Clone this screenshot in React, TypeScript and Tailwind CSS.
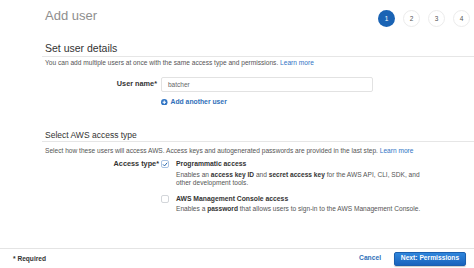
import React from 'react';

const steps = [1, 2, 3, 4];

function Checkbox({ checked }: { checked?: boolean }) {
  return (
    <div
      className={
        checked
          ? 'w-[8px] h-[8px] border border-[#a9c3e3] rounded-[2px] bg-white flex items-center justify-center shrink-0'
          : 'w-[8px] h-[8px] border border-[#d3d6da] rounded-[2px] bg-white flex items-center justify-center shrink-0'
      }
    >
      {checked && (
        <svg viewBox="0 0 10 10" className="w-[7px] h-[7px]">
          <path d="M2 5.2 L4.2 7.4 L8.2 2.6" fill="none" stroke="#1f5fa8" strokeWidth="1.6" strokeLinecap="round" strokeLinejoin="round" />
        </svg>
      )}
    </div>
  );
}

export default function App() {
  return (
    <div className="w-[474px] h-[268px] bg-white flex flex-col overflow-hidden font-['Liberation_Sans',Arial,sans-serif] text-[#444]">
      {/* header */}
      <div className="flex justify-between h-[38px]">
        <h1 className="text-[13px] leading-[15px] pt-[8px] pl-[45px] text-[#8e8e8e]">Add user</h1>
        <div className="flex gap-[8px] pt-[10px] pr-[4px]">
          {steps.map((s) =>
            s === 1 ? (
              <div key={s} className="w-[17px] h-[17px] rounded-full bg-[#1a63b4] text-white text-[6.5px] flex items-center justify-center">
                {s}
              </div>
            ) : (
              <div key={s} className="w-[17px] h-[17px] rounded-full bg-white border border-[#ececec] text-[#555] text-[6.5px] flex items-center justify-center">
                {s}
              </div>
            )
          )}
        </div>
      </div>

      {/* set user details */}
      <div className="ml-[42px] mt-[4px] pl-[3px] pb-[2px] border-b border-[#e6e6e6]">
        <h2 className="text-[10.5px] leading-[12px] text-[#333]">Set user details</h2>
      </div>
      <p className="pl-[45px] mt-[2px] text-[6.6px] leading-[8px] text-[#555]">
        You can add multiple users at once with the same access type and permissions.{' '}
        <span className="text-[#2f74c4]">Learn more</span>
      </p>

      <div className="flex items-center mt-[10px]">
        <label className="w-[157px] text-right text-[7.3px] font-bold text-[#333]">User name*</label>
        <div className="ml-[4px] w-[212px] h-[15px] border border-[#e2e2e2] rounded-[2px] flex items-center pl-[6px] text-[6.5px] text-[#666]">
          batcher
        </div>
      </div>
      <div className="flex items-center mt-[6px] pl-[161px] h-[8px]">
        <svg viewBox="0 0 10 10" className="w-[6.5px] h-[6.5px]">
          <circle cx="5" cy="5" r="5" fill="#2f74c4" />
          <path d="M5 2.4 V7.6 M2.4 5 H7.6" stroke="white" strokeWidth="1.6" />
        </svg>
        <span className="ml-[3px] text-[6.8px] font-bold text-[#2f6fb9]">Add another user</span>
      </div>

      {/* access type */}
      <div className="ml-[42px] mt-[24px] pl-[3px] pb-[1px] border-b border-[#e6e6e6]">
        <h2 className="text-[8.5px] leading-[10px] text-[#333]">Select AWS access type</h2>
      </div>
      <p className="pl-[45px] mt-[5px] text-[6.6px] leading-[8px] text-[#555]">
        Select how these users will access AWS. Access keys and autogenerated passwords are provided in the last step.{' '}
        <span className="text-[#2f74c4]">Learn more</span>
      </p>

      <div className="flex mt-[5px]">
        <label className="w-[159px] text-right text-[7.3px] leading-[8px] font-bold text-[#333]">Access type*</label>
        <div className="ml-[2px] flex flex-col">
          <div className="flex">
            <Checkbox checked />
            <div className="ml-[7px] w-[260px]">
              <div className="text-[6.8px] leading-[8px] font-bold text-[#333]">Programmatic access</div>
              <p className="mt-[3px] text-[6.6px] leading-[8px] text-[#555]">
                Enables an <b className="text-[#333]">access key ID</b> and <b className="text-[#333]">secret access key</b> for the AWS API, CLI, SDK, and other development tools.
              </p>
            </div>
          </div>
          <div className="flex mt-[8px]">
            <Checkbox />
            <div className="ml-[7px] w-[270px]">
              <div className="text-[6.8px] leading-[8px] font-bold text-[#333]">AWS Management Console access</div>
              <p className="mt-[2px] text-[6.6px] leading-[8px] text-[#555]">
                Enables a <b className="text-[#333]">password</b> that allows users to sign-in to the AWS Management Console.
              </p>
            </div>
          </div>
        </div>
      </div>

      {/* footer */}
      <div className="mt-auto h-[20px] border-t border-[#e4e4e4] flex items-center justify-between pl-[13px] pr-[8px]">
        <span className="text-[6.6px] font-bold text-[#333]">* Required</span>
        <div className="flex items-center">
          <button className="text-[6.7px] font-bold text-[#2f6fb9]">Cancel</button>
          <button className="ml-[13px] w-[72px] h-[14px] rounded-[2px] border border-[#1b5fae] bg-gradient-to-b from-[#2f86dc] to-[#1a63bd] text-white text-[6.7px] font-bold shadow-[0_1px_1px_rgba(0,0,0,0.2)]">
            Next: Permissions
          </button>
        </div>
      </div>
    </div>
  );
}
